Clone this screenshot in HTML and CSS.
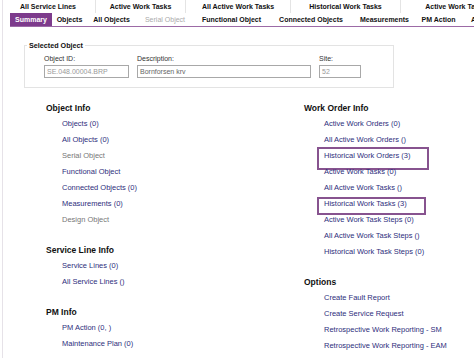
FILE: index.html
```html
<!DOCTYPE html>
<html lang="en">
<head>
  <meta charset="UTF-8" />
  <meta name="viewport" content="width=device-width, initial-scale=1.0">
  <title>Summary</title>
  <link rel="stylesheet" href="styles.css">
</head>
<body>

  <div class="page">
    <!-- upper tab row -->
    <div class="tabs-top">
      <div class="tab-top w1">All Service Lines</div>
      <div class="tab-top w2">Active Work Tasks</div>
      <div class="tab-top w3">All Active Work Tasks</div>
      <div class="tab-top w4">Historical Work Tasks</div>
      <div class="tab-top w5">Active Work Tasks</div>
    </div>

    <!-- lower tab row -->
    <div class="tabs">
      <div class="tab active">Summary</div>
      <div class="tab t-objects">Objects</div>
      <div class="tab t-all">All Objects</div>
      <div class="tab t-serial disabled">Serial Object</div>
      <div class="tab t-func">Functional Object</div>
      <div class="tab t-conn">Connected Objects</div>
      <div class="tab t-meas">Measurements</div>
      <div class="tab t-pm">PM Action</div>
      <div class="tab t-last">Active</div>
    </div>

    <fieldset class="selected">
      <legend>Selected Object</legend>
      <div class="fields">
        <div class="field">
          <label>Object ID:</label>
          <div class="input id">SE.048.00004.BRP</div>
        </div>
        <div class="field">
          <label>Description:</label>
          <div class="input desc">Bornforsen krv</div>
        </div>
        <div class="field">
          <label>Site:</label>
          <div class="input site">52</div>
        </div>
      </div>
    </fieldset>

    <div class="info">
      <div class="col col-left">
        <div class="section">
          <h3>Object Info</h3>
          <ul>
            <li><a>Objects (0)</a></li>
            <li><a>All Objects (0)</a></li>
            <li class="off">Serial Object</li>
            <li><a>Functional Object</a></li>
            <li><a>Connected Objects (0)</a></li>
            <li><a>Measurements (0)</a></li>
            <li class="off">Design Object</li>
          </ul>
        </div>
        <div class="section">
          <h3>Service Line Info</h3>
          <ul>
            <li><a>Service Lines (0)</a></li>
            <li><a>All Service Lines ()</a></li>
          </ul>
        </div>
        <div class="section">
          <h3>PM Info</h3>
          <ul>
            <li><a>PM Action (0, )</a></li>
            <li><a>Maintenance Plan (0)</a></li>
          </ul>
        </div>
      </div>

      <div class="col col-right">
        <div class="section">
          <h3>Work Order Info</h3>
          <ul>
            <li><a>Active Work Orders (0)</a></li>
            <li><a>All Active Work Orders ()</a></li>
            <li class="mark mark-tall"><a>Historical Work Orders (3)</a></li>
            <li><a>Active Work Tasks (0)</a></li>
            <li><a>All Active Work Tasks ()</a></li>
            <li class="mark mark-short"><a>Historical Work Tasks (3)</a></li>
            <li><a>Active Work Task Steps (0)</a></li>
            <li><a>All Active Work Task Steps ()</a></li>
            <li><a>Historical Work Task Steps (0)</a></li>
          </ul>
        </div>
        <div class="section">
          <h3>Options</h3>
          <ul>
            <li><a>Create Fault Report</a></li>
            <li><a>Create Service Request</a></li>
            <li><a>Retrospective Work Reporting - SM</a></li>
            <li><a>Retrospective Work Reporting - EAM</a></li>
          </ul>
        </div>
      </div>
    </div>
  </div>

</body>
</html>
```

FILE: styles.css
```css
* {
  margin: 0;
  padding: 0;
  box-sizing: border-box;
}

body {
  background-color: #fff;
  color: #111;
  font-family: "Liberation Sans", Arial, sans-serif;
  width: 474px;
  height: 358px;
  overflow: hidden;
}

.page {
  border-left: 1px solid #e6e2e8;
  margin-left: 2px;
  min-height: 358px;
}

/* tabs */
.tabs-top {
  display: flex;
  height: 13px;
  margin-left: -2px;
}

.tab-top {
  flex: none;
  font-size: 7px;
  font-weight: bold;
  line-height: 13px;
  text-align: center;
  white-space: nowrap;
  border-right: 1px solid #e4e4e4;
}

.w1 { width: 95px; }
.w2 { width: 90px; }
.w3 { width: 105px; }
.w4 { width: 110px; }
.w5 { width: 110px; border-right: none; }

.tabs {
  display: flex;
  height: 14px;
  margin-left: 7px;
  border-bottom: 1px solid #9c6aa6;
  overflow: hidden;
}

.tab {
  flex: none;
  font-size: 7px;
  font-weight: bold;
  line-height: 13px;
  text-align: center;
  white-space: nowrap;
}

.tab.active {
  background-color: #7d3b8c;
  color: #fff;
  width: 42px;
}

.tab.disabled {
  color: #aaa;
  font-weight: normal;
}

.t-objects { width: 35px; }
.t-all { width: 49px; }
.t-serial { width: 58px; }
.t-func { width: 75px; }
.t-conn { width: 84px; }
.t-meas { width: 63px; }
.t-pm { width: 45px; }
.t-last { padding-left: 10px; text-align: left; }

/* selected object */
.selected {
  margin: 14px 0 0 21px;
  width: 370px;
  border: 1px solid #e3e3e3;
  padding: 0 0 9px 2px;
}

.selected legend {
  font-size: 7.2px;
  font-weight: bold;
  line-height: 9px;
  padding: 0 2px;
}

.fields {
  display: flex;
  gap: 8px;
  padding: 4px 0 0 17px;
}

.field label {
  display: block;
  font-size: 7px;
  line-height: 9px;
  color: #333;
  margin-bottom: 2px;
}

.input {
  height: 13px;
  border: 1px solid #a8a8a8;
  font-size: 7px;
  line-height: 11px;
  padding-left: 2px;
  color: #999;
  white-space: nowrap;
}

.input.id { width: 85px; }
.input.desc { width: 174px; color: #666; }
.input.site { width: 42px; }

/* info columns */
.info {
  display: grid;
  grid-template-columns: 258px 1fr;
  padding-left: 43px;
  margin-top: 12px;
}

.section {
  margin-bottom: 14px;
}

.section h3 {
  font-size: 8.5px;
  line-height: 16px;
  font-weight: bold;
  color: #111;
}

.section ul {
  list-style: none;
}

.col-left ul { padding-left: 16px; }
.col-right ul { padding-left: 20px; }

.section li {
  font-size: 7.5px;
  line-height: 16px;
  color: #2e2e7c;
  white-space: nowrap;
  position: relative;
}

.section li.off {
  color: #777;
}

/* highlight frames drawn over the list */
.mark::after {
  content: "";
  position: absolute;
  left: -7px;
  border: 2px solid #87538f;
}

.mark-tall::after {
  top: -1px;
  width: 108px;
  height: 19px;
}

.mark-short::after {
  top: 1px;
  width: 105px;
  height: 14px;
}
```
